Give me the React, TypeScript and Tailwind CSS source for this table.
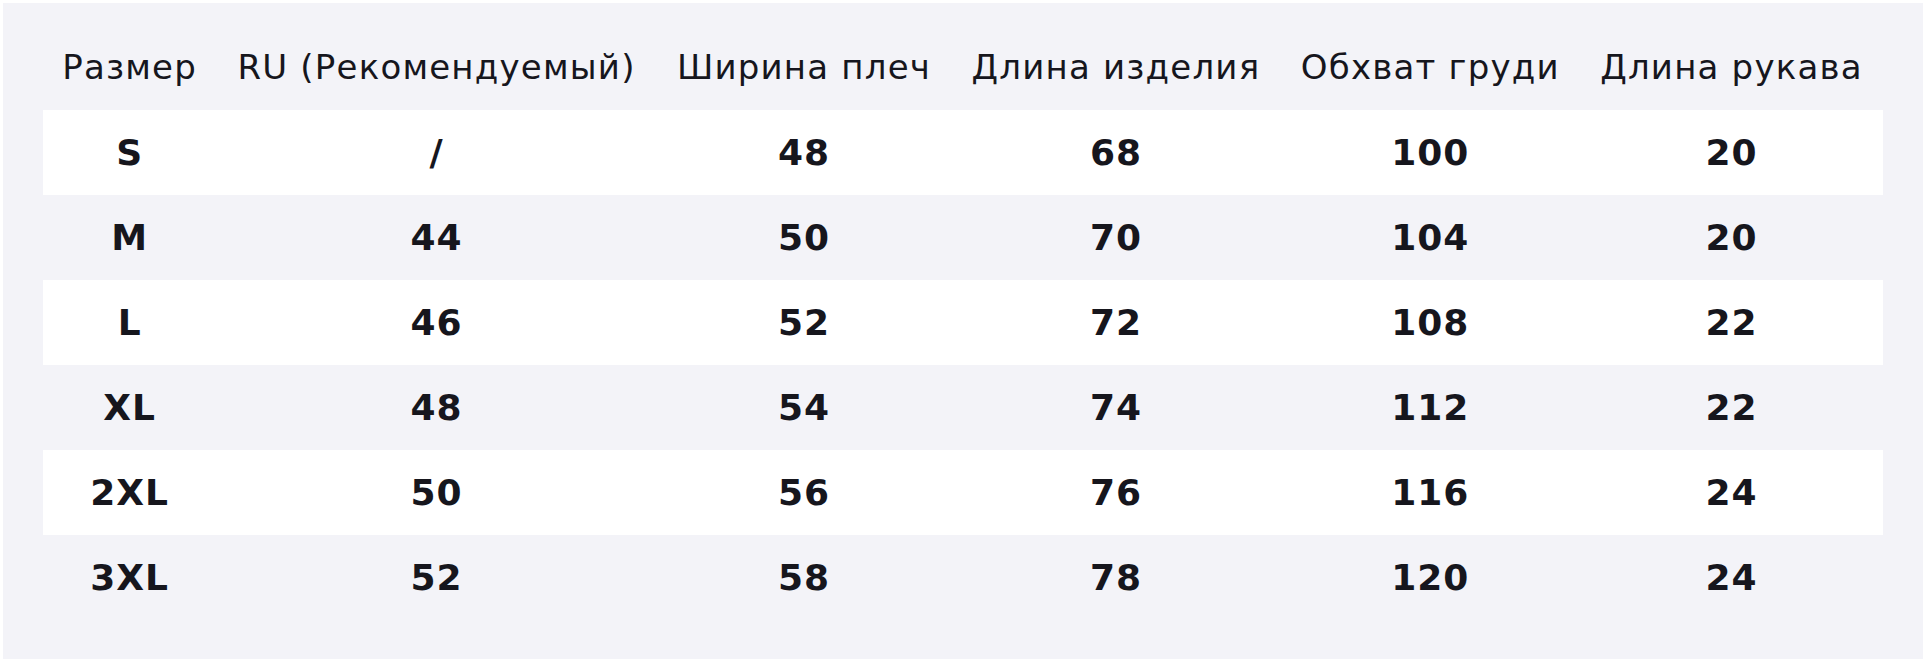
const headers = [
  "Размер",
  "RU (Рекомендуемый)",
  "Ширина плеч",
  "Длина изделия",
  "Обхват груди",
  "Длина рукава",
];

const rows = [
  ["S", "/", "48", "68", "100", "20"],
  ["M", "44", "50", "70", "104", "20"],
  ["L", "46", "52", "72", "108", "22"],
  ["XL", "48", "54", "74", "112", "22"],
  ["2XL", "50", "56", "76", "116", "24"],
  ["3XL", "52", "58", "78", "120", "24"],
];

export default function App() {
  return (
    <div className="min-h-screen bg-white p-[3px] font-['DejaVu_Sans',sans-serif] text-[#16161d]">
      <div className="bg-[#f3f3f8] px-10 pt-[22px] pb-[39px]">
        <table className="w-full border-collapse">
          <thead>
            <tr className="h-[85px]">
              {headers.map((h) => (
                <th
                  key={h}
                  className="px-[18px] text-center text-[34px] font-normal tracking-[1.2px] whitespace-nowrap"
                >
                  {h}
                </th>
              ))}
            </tr>
          </thead>
          <tbody>
            {rows.map((row, i) => (
              <tr key={row[0]} className={i % 2 === 0 ? "h-[85px] bg-white" : "h-[85px]"}>
                {row.map((cell, j) => (
                  <td key={j} className="px-[18px] text-center text-[36px] font-bold tracking-[1px]">
                    {cell}
                  </td>
                ))}
              </tr>
            ))}
          </tbody>
        </table>
      </div>
    </div>
  );
}
